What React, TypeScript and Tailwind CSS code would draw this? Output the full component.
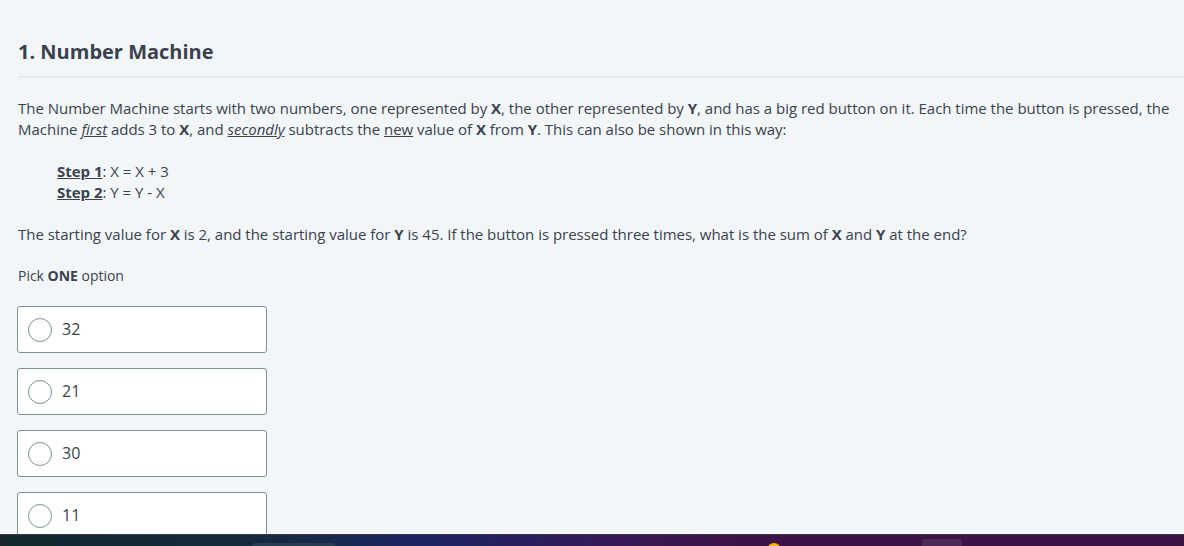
import React from "react";

const options = ["32", "21", "30", "11"];

export default function App() {
  return (
    <div
      className="w-[1184px] h-[546px] overflow-hidden bg-[#f3f6f8] flex flex-col text-[#39424e]"
      style={{ fontFamily: '"Open Sans", sans-serif' }}
    >
      <div className="flex-1 overflow-hidden pl-[18px] pt-[38px]">
        <h1 className="text-[20px] font-bold leading-[28px] pb-[10px] border-b-2 border-[#e5eaed]">
          1. Number Machine
        </h1>
        <div className="pt-[20px] text-[15px] leading-[21px] pr-[4px] tracking-[-0.02px]">
          <p>
            The Number Machine starts with two numbers, one represented by <b>X</b>, the other represented by{" "}
            <b>Y</b>, and has a big red button on it. Each time the button is pressed, the Machine{" "}
            <i className="underline">first</i> adds 3 to <b>X</b>, and <i className="underline">secondly</i> subtracts
            the <span className="underline">new</span> value of <b>X</b> from <b>Y</b>. This can also be shown in this
            way:
          </p>
          <div className="pl-[39px] pt-[21px]">
            <p>
              <b className="underline">Step 1</b>: X = X + 3
            </p>
            <p>
              <b className="underline">Step 2</b>: Y = Y - X
            </p>
          </div>
          <p className="pt-[21px]">
            The starting value for <b>X</b> is 2, and the starting value for <b>Y</b> is 45. If the button is pressed
            three times, what is the sum of <b>X</b> and <b>Y</b> at the end?
          </p>
          <p className="pt-[21px] text-[14px] leading-[20px]">
            Pick <b>ONE</b> option
          </p>
          <div className="pt-[20px] -ml-[1px] flex flex-col gap-[15px]">
            {options.map((o) => (
              <div
                key={o}
                className="w-[250px] h-[47px] bg-white border border-[#7e9094] rounded-[3px] flex items-center pl-[10px] gap-[10px] shrink-0"
              >
                <span className="w-[24px] h-[24px] rounded-full border border-[#7e9094] bg-white" />
                <span className="text-[16px]">{o}</span>
              </div>
            ))}
          </div>
        </div>
      </div>
      <div className="relative h-[12px] shrink-0 border-t border-[#3b3b40] bg-[linear-gradient(90deg,#14262c_0%,#172a3a_20%,#1c2462_36%,#341a58_50%,#3d1248_62%,#3d1245_100%)] overflow-hidden">
        <div className="absolute left-[252px] top-[8px] w-[84px] h-[10px] rounded-[4px] bg-[#2c3c50]" />
        <div className="absolute left-[767px] top-[8px] w-[14px] h-[14px] rounded-full bg-[#f5b800]" />
        <div className="absolute left-[922px] top-[4px] w-[40px] h-[10px] rounded-[3px] bg-[#4d2a55]" />
      </div>
    </div>
  );
}
